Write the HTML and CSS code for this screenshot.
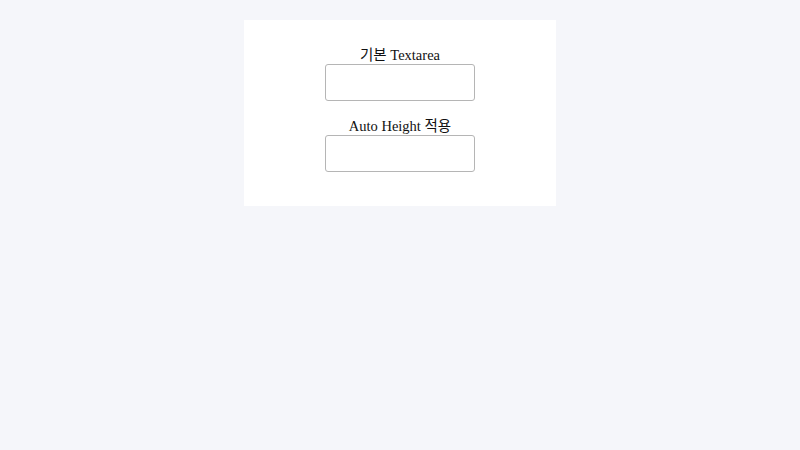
FILE: index.html
```html
<!DOCTYPE html>
<html lang="ko">
  <head>
    <meta charset="UTF-8" />
    <meta name="viewport" content="width=device-width, initial-scale=1.0" />
    <title>Textarea Auto Height</title>
    <link rel="stylesheet" href="styles.css">
  </head>
  <body>
    <div class="card">
      <div class="field">
        <label for="basic">기본 Textarea</label>
        <textarea id="basic"></textarea>
      </div>
      <div class="field">
        <label for="auto">Auto Height 적용</label>
        <textarea id="auto" class="auto-height"></textarea>
      </div>
    </div>

    <script>
      const autoTextarea = document.getElementById("auto");

      // grow the textarea with its content
      autoTextarea.addEventListener("input", () => {
        autoTextarea.style.height = "auto";
        autoTextarea.style.height = `${autoTextarea.scrollHeight + 2}px`;
      });
    </script>
  </body>
</html>
```

FILE: styles.css
```css
body {
  margin: 0;
  background-color: #f5f6fa;
  font-family: "Liberation Serif", "Noto Sans CJK KR", serif;
}
.card {
  width: 312px;
  margin: 20px auto 0;
  padding: 26px 0 34px;
  box-sizing: border-box;
  background-color: #fff;
  display: flex;
  flex-direction: column;
  align-items: center;
  gap: 16px;
}
.field {
  display: flex;
  flex-direction: column;
  align-items: center;
}
.field label {
  font-size: 14.5px;
  line-height: 18px;
  color: #111;
}
.field textarea {
  display: block;
  width: 150px;
  height: 37px;
  box-sizing: border-box;
  border: 1px solid #b5b5b5;
  border-radius: 3px;
  padding: 2px;
  resize: none;
  overflow: hidden;
}
```
